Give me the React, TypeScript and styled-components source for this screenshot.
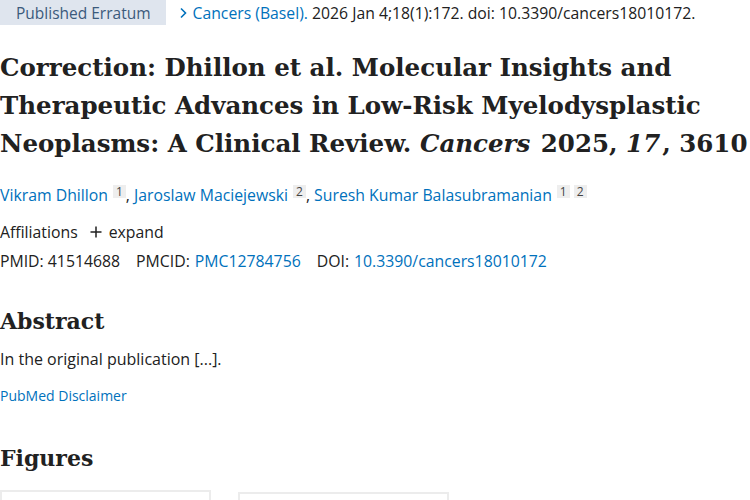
import React from "react";
import styled, { createGlobalStyle } from "styled-components";

const GlobalStyle = createGlobalStyle`
  html, body { margin: 0; padding: 0; background: #ffffff; }
  body {
    font-family: "Open Sans", "Noto Sans", sans-serif;
    color: #212121;
    -webkit-font-smoothing: antialiased;
  }
  a { text-decoration: none; color: #0071bc; }
`;

const Page = styled.main`
  width: 750px;
  display: flex;
  flex-direction: column;
`;

const HeaderRow = styled.div`
  display: flex;
  align-items: center;
  gap: 12px;
  height: 25px;
  font-size: 15.75px;
`;

const Badge = styled.span`
  display: inline-flex;
  align-items: center;
  height: 25px;
  padding: 0 15px 0 16px;
  background: #dfe5ee;
  color: #3b5a7c;
  font-size: 15.5px;
`;

const Citation = styled.span`
  display: inline-flex;
  align-items: center;
  gap: 5px;
  color: #212121;
  white-space: nowrap;
`;

const Chevron = styled.svg`
  width: 10px;
  height: 12px;
  color: #0071bc;
`;

const Title = styled.h1`
  margin: 24px 0 0;
  font-family: "DejaVu Serif", "Liberation Serif", serif;
  font-weight: 700;
  font-size: 24.5px;
  line-height: 38px;
  color: #212121;
`;

const Italic = styled.em`
  font-weight: 700;
  font-style: italic;
  margin-right: 2px;
`;

const Authors = styled.div`
  margin-top: 21px;
  font-size: 15.8px;
  line-height: 22px;
  height: 22px;
`;

const Sup = styled.span`
  display: inline-block;
  margin-left: 5px;
  padding: 0 3px;
  background: #eeeeee;
  color: #444;
  font-size: 12px;
  line-height: 13px;
  vertical-align: 5px;
  & + & { margin-left: 4px; }
`;

const MetaRow = styled.div<{ $top: number; $gap: number }>`
  display: flex;
  align-items: center;
  gap: ${(p) => p.$gap}px;
  margin-top: ${(p) => p.$top}px;
  font-size: 15.8px;
  line-height: 22px;
`;

const Expand = styled.span`
  display: inline-flex;
  align-items: center;
  gap: 7px;
`;

const Id = styled.span`
  display: inline-flex;
  gap: 5px;
`;

const SectionHeading = styled.h2<{ $top: number }>`
  margin: ${(p) => p.$top}px 0 0;
  font-family: "DejaVu Serif", "Liberation Serif", serif;
  font-weight: 700;
  font-size: 22px;
  line-height: 30px;
  color: #212121;
`;

const Para = styled.p`
  margin: 12px 0 0;
  font-size: 16px;
  line-height: 22px;
`;

const Disclaimer = styled.a`
  margin-top: 16px;
  font-size: 14px;
  line-height: 20px;
`;

const FigureGrid = styled.div`
  display: flex;
  gap: 27px;
  margin-top: 17px;
  align-items: flex-start;
`;

const FigureCard = styled.div<{ $offset: number }>`
  width: 211px;
  height: 60px;
  margin-top: ${(p) => p.$offset}px;
  border: 2px solid #ececec;
  box-sizing: border-box;
  background: #fff;
`;

export default function App() {
  return (
    <>
      <GlobalStyle />
      <Page>
        <HeaderRow>
          <Badge>Published Erratum</Badge>
          <Citation>
            <Chevron viewBox="0 0 10 12" aria-hidden>
              <path d="M3 1.5 L7.5 6 L3 10.5" fill="none" stroke="currentColor" strokeWidth="1.6" />
            </Chevron>
            <span>
              <a href="#">Cancers (Basel).</a> 2026 Jan 4;18(1):172. doi: 10.3390/cancers18010172.
            </span>
          </Citation>
        </HeaderRow>

        <Title>
          Correction: Dhillon et al. Molecular Insights and Therapeutic Advances in Low-Risk
          Myelodysplastic Neoplasms: A Clinical Review. <Italic>Cancers</Italic> 2025, <Italic>17</Italic>, 3610
        </Title>

        <Authors>
          <a href="#">Vikram Dhillon</a>
          <Sup>1</Sup>, <a href="#">Jaroslaw Maciejewski</a>
          <Sup>2</Sup>, <a href="#">Suresh Kumar Balasubramanian</a>
          <Sup>1</Sup>
          <Sup>2</Sup>
        </Authors>

        <MetaRow $top={15} $gap={12}>
          <span>Affiliations</span>
          <Expand>
            <svg width="12" height="12" viewBox="0 0 12 12" aria-hidden>
              <path d="M6 0.5 V11.5 M0.5 6 H11.5" stroke="#212121" strokeWidth="1.5" />
            </svg>
            expand
          </Expand>
        </MetaRow>

        <MetaRow $top={7} $gap={16}>
          <Id>PMID: 41514688</Id>
          <Id>
            PMCID: <a href="#">PMC12784756</a>
          </Id>
          <Id>
            DOI: <a href="#">10.3390/cancers18010172</a>
          </Id>
        </MetaRow>

        <SectionHeading $top={34}>Abstract</SectionHeading>
        <Para>In the original publication [...].</Para>
        <Disclaimer href="#">PubMed Disclaimer</Disclaimer>

        <SectionHeading $top={37}>Figures</SectionHeading>
        <FigureGrid>
          <FigureCard $offset={0} />
          <FigureCard $offset={2} />
        </FigureGrid>
      </Page>
    </>
  );
}
